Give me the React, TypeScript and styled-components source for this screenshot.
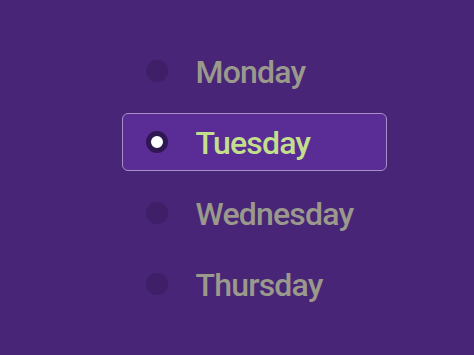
import React, { useState } from "react";
import styled, { createGlobalStyle } from "styled-components";

const GlobalStyle = createGlobalStyle`
  html, body {
    margin: 0;
    padding: 0;
    background: #482577;
  }
`;

const Page = styled.div`
  width: 474px;
  height: 355px;
  background: #482577;
  display: flex;
  flex-direction: column;
  align-items: center;
  padding-top: 42px;
  box-sizing: border-box;
`;

const List = styled.div`
  display: flex;
  flex-direction: column;
  gap: 13px;
  width: 265px;
  margin-left: 34px;
`;

const Option = styled.div<{ selected: boolean }>`
  display: flex;
  align-items: center;
  height: 58px;
  box-sizing: border-box;
  padding-left: 23px;
  border-radius: 6px;
  border: 1px solid ${({ selected }) => (selected ? "#a98fc9" : "transparent")};
  background: ${({ selected }) => (selected ? "#5a2c96" : "transparent")};
  cursor: pointer;
`;

const Dot = styled.span<{ selected: boolean }>`
  width: 22px;
  height: 22px;
  border-radius: 50%;
  box-sizing: border-box;
  background: ${({ selected }) => (selected ? "#ffffff" : "#3e1f68")};
  border: ${({ selected }) => (selected ? "5px solid #2e1752" : "none")};
  flex-shrink: 0;
`;

const Label = styled.span<{ selected: boolean }>`
  margin-left: 28px;
  font-family: Roboto, "DejaVu Sans", sans-serif;
  font-size: 32px;
  font-weight: 500;
  letter-spacing: -0.8px;
  color: ${({ selected }) => (selected ? "#c4df8c" : "#9a998c")};
  line-height: 1;
  padding-top: 1px;
`;

const days = ["Monday", "Tuesday", "Wednesday", "Thursday"];

export default function App() {
  const [selected, setSelected] = useState("Tuesday");
  return (
    <>
      <GlobalStyle />
      <Page>
        <List>
          {days.map((d) => (
            <Option key={d} selected={d === selected} onClick={() => setSelected(d)}>
              <Dot selected={d === selected} />
              <Label selected={d === selected}>{d}</Label>
            </Option>
          ))}
        </List>
      </Page>
    </>
  );
}
